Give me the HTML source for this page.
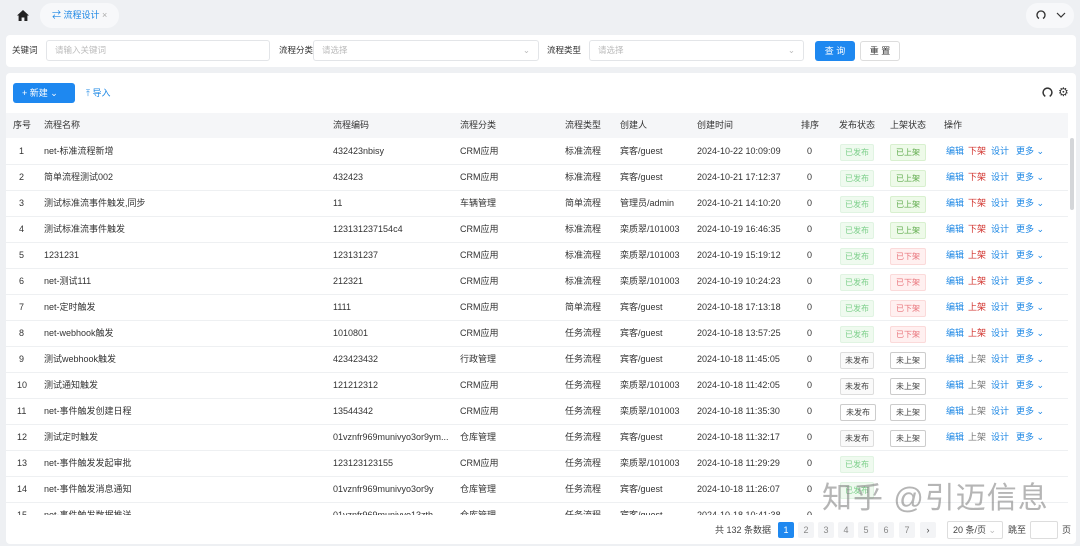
<!DOCTYPE html>
<html><head><meta charset="utf-8">
<style>
*{box-sizing:border-box;margin:0;padding:0}
body{width:1080px;height:546px;overflow:hidden;background:#eef0f3;font-family:"Liberation Sans","Noto Sans CJK SC",sans-serif;font-size:9px;line-height:11px;color:#333;position:relative}
.abs{position:absolute}
.card{position:absolute;background:#fff;border-radius:4px}
.inp{position:absolute;border:1px solid #e3e5e8;border-radius:3px;height:21px;color:#bbb;font-size:8.5px;line-height:11px;padding:4px 8px;background:#fff}
.lbl{position:absolute;font-size:8.5px;color:#333;line-height:11px}
.row{position:absolute;left:6px;width:1062px;height:26px;border-bottom:1px solid #eef0f2}
.row span{position:absolute;top:7px;white-space:nowrap;line-height:11px}
.tag{border-radius:2px;font-size:8px;padding:2px 4px;top:5px!important}
.g1{background:#effaef;color:#7ccf8a;border:1px solid #e0f4e2}
.g2{background:#eefae9;color:#5daa4a;border:1px solid #d8f0cf;padding:2px 5px!important}
.r2{background:#fff0f0;color:#e8737a;border:1px solid #fbdada;padding:2px 5px!important}
.n1{background:#fafafa;color:#444;border:1px solid #ddd}
.n2{background:#fff;color:#444;border:1px solid #ccc;padding:2px 5px!important}
.b{color:#1e88e5}.rd{color:#d2322d}.gy{color:#777}
.pg{position:absolute;top:522px;width:16px;height:16px;border-radius:2px;background:#f3f4f6;color:#888;font-size:9px;text-align:center;line-height:16px}
</style></head><body>
<svg class="abs" style="left:17px;top:10px" width="12" height="11" viewBox="0 0 12 11"><path d="M6 0L0 5.5h1.6V11h3V7.5h2.8V11h3V5.5H12z" fill="#222"/></svg>
<div class="abs" style="left:40px;top:3px;width:79px;height:25px;background:#f7f8fa;border-radius:12px"></div>
<div class="abs" style="left:52px;top:10px;font-size:9px;color:#1e88e5">⇄ 流程设计 <span style="color:#aaa">×</span></div>
<div class="abs" style="left:1026px;top:3px;width:48px;height:25px;background:#f7f8fa;border-radius:12px"></div>
<svg class="abs" style="left:1036px;top:10px" width="10" height="10" viewBox="0 0 10 10"><path d="M3 8.5A4 4 0 1 1 7 8.5" fill="none" stroke="#333" stroke-width="1.3"/></svg>
<svg class="abs" style="left:1056px;top:12px" width="10" height="6" viewBox="0 0 10 6"><path d="M1 1l4 4 4-4" fill="none" stroke="#333" stroke-width="1.2"/></svg>
<div class="card" style="left:6px;top:35px;width:1070px;height:32px"></div>
<div class="lbl" style="left:12px;top:45px">关键词</div>
<div class="inp" style="left:46px;top:40px;width:224px">请输入关键词</div>
<div class="lbl" style="left:279px;top:45px">流程分类</div>
<div class="inp" style="left:313px;top:40px;width:226px">请选择<span style="position:absolute;right:8px">⌄</span></div>
<div class="lbl" style="left:547px;top:45px">流程类型</div>
<div class="inp" style="left:589px;top:40px;width:215px">请选择<span style="position:absolute;right:8px">⌄</span></div>
<div class="abs" style="left:815px;top:41px;width:40px;height:20px;background:#1e88f0;border-radius:3px;color:#fff;font-size:9px;text-align:center;line-height:20px">查 询</div>
<div class="abs" style="left:860px;top:41px;width:40px;height:20px;background:#fff;border:1px solid #ddd;border-radius:3px;color:#333;font-size:9px;text-align:center;line-height:18px">重 置</div>
<div class="card" style="left:6px;top:73px;width:1070px;height:471px"></div>
<div class="abs" style="left:13px;top:83px;width:62px;height:20px;background:#1e88f0;border-radius:3px;color:#fff;font-size:9px;line-height:20px;padding-left:9px">+ 新建 ⌄</div>
<div class="abs" style="left:86px;top:88px;color:#1e88e5;font-size:9px">⤒ 导入</div>
<svg class="abs" style="left:1042px;top:87px" width="11" height="11" viewBox="0 0 10 10"><path d="M3 8.5A4 4 0 1 1 7 8.5" fill="none" stroke="#333" stroke-width="1.3"/></svg>
<div class="abs" style="left:1058px;top:85px;font-size:12px;line-height:14px;color:#333">⚙</div>
<div class="abs" style="left:6px;top:113px;width:1062px;height:25px;background:#f5f6f8"></div>
<div class="row" style="top:113px;border:none"><span style="left:7px">序号</span><span style="left:38px">流程名称</span><span style="left:327px">流程编码</span><span style="left:454px">流程分类</span><span style="left:559px">流程类型</span><span style="left:614px">创建人</span><span style="left:691px">创建时间</span><span style="left:795px">排序</span><span style="left:833px">发布状态</span><span style="left:884px">上架状态</span><span style="left:938px">操作</span></div>
<div class="abs" style="left:6px;top:138px;width:1062px;height:377px;overflow:hidden">
<div style="position:relative;left:-6px;top:-137px">
<div class="row" style="top:138px"><span style="left:13px">1</span><span style="left:38px">net-标准流程新增</span><span style="left:327px">432423nbisy</span><span style="left:454px">CRM应用</span><span style="left:559px">标准流程</span><span style="left:614px">宾客/guest</span><span style="left:691px">2024-10-22 10:09:09</span><span style="left:801px">0</span><span class="tag g1" style="left:834px">已发布</span><span class="tag g2" style="left:884px">已上架</span><span class="b" style="left:940px">编辑</span><span class="rd" style="left:962px">下架</span><span class="b" style="left:985px">设计</span><span class="b" style="left:1010px">更多 ⌄</span></div>
<div class="row" style="top:164px"><span style="left:13px">2</span><span style="left:38px">简单流程测试002</span><span style="left:327px">432423</span><span style="left:454px">CRM应用</span><span style="left:559px">标准流程</span><span style="left:614px">宾客/guest</span><span style="left:691px">2024-10-21 17:12:37</span><span style="left:801px">0</span><span class="tag g1" style="left:834px">已发布</span><span class="tag g2" style="left:884px">已上架</span><span class="b" style="left:940px">编辑</span><span class="rd" style="left:962px">下架</span><span class="b" style="left:985px">设计</span><span class="b" style="left:1010px">更多 ⌄</span></div>
<div class="row" style="top:190px"><span style="left:13px">3</span><span style="left:38px">测试标准流事件触发,同步</span><span style="left:327px">11</span><span style="left:454px">车辆管理</span><span style="left:559px">简单流程</span><span style="left:614px">管理员/admin</span><span style="left:691px">2024-10-21 14:10:20</span><span style="left:801px">0</span><span class="tag g1" style="left:834px">已发布</span><span class="tag g2" style="left:884px">已上架</span><span class="b" style="left:940px">编辑</span><span class="rd" style="left:962px">下架</span><span class="b" style="left:985px">设计</span><span class="b" style="left:1010px">更多 ⌄</span></div>
<div class="row" style="top:216px"><span style="left:13px">4</span><span style="left:38px">测试标准流事件触发</span><span style="left:327px">123131237154c4</span><span style="left:454px">CRM应用</span><span style="left:559px">标准流程</span><span style="left:614px">栾质翠/101003</span><span style="left:691px">2024-10-19 16:46:35</span><span style="left:801px">0</span><span class="tag g1" style="left:834px">已发布</span><span class="tag g2" style="left:884px">已上架</span><span class="b" style="left:940px">编辑</span><span class="rd" style="left:962px">下架</span><span class="b" style="left:985px">设计</span><span class="b" style="left:1010px">更多 ⌄</span></div>
<div class="row" style="top:242px"><span style="left:13px">5</span><span style="left:38px">1231231</span><span style="left:327px">123131237</span><span style="left:454px">CRM应用</span><span style="left:559px">标准流程</span><span style="left:614px">栾质翠/101003</span><span style="left:691px">2024-10-19 15:19:12</span><span style="left:801px">0</span><span class="tag g1" style="left:834px">已发布</span><span class="tag r2" style="left:884px">已下架</span><span class="b" style="left:940px">编辑</span><span class="rd" style="left:962px">上架</span><span class="b" style="left:985px">设计</span><span class="b" style="left:1010px">更多 ⌄</span></div>
<div class="row" style="top:268px"><span style="left:13px">6</span><span style="left:38px">net-测试111</span><span style="left:327px">212321</span><span style="left:454px">CRM应用</span><span style="left:559px">标准流程</span><span style="left:614px">栾质翠/101003</span><span style="left:691px">2024-10-19 10:24:23</span><span style="left:801px">0</span><span class="tag g1" style="left:834px">已发布</span><span class="tag r2" style="left:884px">已下架</span><span class="b" style="left:940px">编辑</span><span class="rd" style="left:962px">上架</span><span class="b" style="left:985px">设计</span><span class="b" style="left:1010px">更多 ⌄</span></div>
<div class="row" style="top:294px"><span style="left:13px">7</span><span style="left:38px">net-定时触发</span><span style="left:327px">1111</span><span style="left:454px">CRM应用</span><span style="left:559px">简单流程</span><span style="left:614px">宾客/guest</span><span style="left:691px">2024-10-18 17:13:18</span><span style="left:801px">0</span><span class="tag g1" style="left:834px">已发布</span><span class="tag r2" style="left:884px">已下架</span><span class="b" style="left:940px">编辑</span><span class="rd" style="left:962px">上架</span><span class="b" style="left:985px">设计</span><span class="b" style="left:1010px">更多 ⌄</span></div>
<div class="row" style="top:320px"><span style="left:13px">8</span><span style="left:38px">net-webhook触发</span><span style="left:327px">1010801</span><span style="left:454px">CRM应用</span><span style="left:559px">任务流程</span><span style="left:614px">宾客/guest</span><span style="left:691px">2024-10-18 13:57:25</span><span style="left:801px">0</span><span class="tag g1" style="left:834px">已发布</span><span class="tag r2" style="left:884px">已下架</span><span class="b" style="left:940px">编辑</span><span class="rd" style="left:962px">上架</span><span class="b" style="left:985px">设计</span><span class="b" style="left:1010px">更多 ⌄</span></div>
<div class="row" style="top:346px"><span style="left:13px">9</span><span style="left:38px">测试webhook触发</span><span style="left:327px">423423432</span><span style="left:454px">行政管理</span><span style="left:559px">任务流程</span><span style="left:614px">宾客/guest</span><span style="left:691px">2024-10-18 11:45:05</span><span style="left:801px">0</span><span class="tag n1" style="left:834px">未发布</span><span class="tag n2" style="left:884px">未上架</span><span class="b" style="left:940px">编辑</span><span class="gy" style="left:962px">上架</span><span class="b" style="left:985px">设计</span><span class="b" style="left:1010px">更多 ⌄</span></div>
<div class="row" style="top:372px"><span style="left:11px">10</span><span style="left:38px">测试通知触发</span><span style="left:327px">121212312</span><span style="left:454px">CRM应用</span><span style="left:559px">任务流程</span><span style="left:614px">栾质翠/101003</span><span style="left:691px">2024-10-18 11:42:05</span><span style="left:801px">0</span><span class="tag n1" style="left:834px">未发布</span><span class="tag n2" style="left:884px">未上架</span><span class="b" style="left:940px">编辑</span><span class="gy" style="left:962px">上架</span><span class="b" style="left:985px">设计</span><span class="b" style="left:1010px">更多 ⌄</span></div>
<div class="row" style="top:398px"><span style="left:11px">11</span><span style="left:38px">net-事件触发创建日程</span><span style="left:327px">13544342</span><span style="left:454px">CRM应用</span><span style="left:559px">任务流程</span><span style="left:614px">栾质翠/101003</span><span style="left:691px">2024-10-18 11:35:30</span><span style="left:801px">0</span><span class="tag n2" style="left:834px">未发布</span><span class="tag n2" style="left:884px">未上架</span><span class="b" style="left:940px">编辑</span><span class="gy" style="left:962px">上架</span><span class="b" style="left:985px">设计</span><span class="b" style="left:1010px">更多 ⌄</span></div>
<div class="row" style="top:424px"><span style="left:11px">12</span><span style="left:38px">测试定时触发</span><span style="left:327px">01vznfr969munivyo3or9ym...</span><span style="left:454px">仓库管理</span><span style="left:559px">任务流程</span><span style="left:614px">宾客/guest</span><span style="left:691px">2024-10-18 11:32:17</span><span style="left:801px">0</span><span class="tag n1" style="left:834px">未发布</span><span class="tag n2" style="left:884px">未上架</span><span class="b" style="left:940px">编辑</span><span class="gy" style="left:962px">上架</span><span class="b" style="left:985px">设计</span><span class="b" style="left:1010px">更多 ⌄</span></div>
<div class="row" style="top:450px"><span style="left:11px">13</span><span style="left:38px">net-事件触发发起审批</span><span style="left:327px">123123123155</span><span style="left:454px">CRM应用</span><span style="left:559px">任务流程</span><span style="left:614px">栾质翠/101003</span><span style="left:691px">2024-10-18 11:29:29</span><span style="left:801px">0</span><span class="tag g1" style="left:834px">已发布</span></div>
<div class="row" style="top:476px"><span style="left:11px">14</span><span style="left:38px">net-事件触发消息通知</span><span style="left:327px">01vznfr969munivyo3or9y</span><span style="left:454px">仓库管理</span><span style="left:559px">任务流程</span><span style="left:614px">宾客/guest</span><span style="left:691px">2024-10-18 11:26:07</span><span style="left:801px">0</span><span class="tag g1" style="left:834px">已发布</span></div>
<div class="row" style="top:502px"><span style="left:11px">15</span><span style="left:38px">net-事件触发数据推送</span><span style="left:327px">01vznfr969munivyo13zth</span><span style="left:454px">仓库管理</span><span style="left:559px">任务流程</span><span style="left:614px">宾客/guest</span><span style="left:691px">2024-10-18 10:41:38</span><span style="left:801px">0</span></div>
</div></div>
<div class="abs" style="left:1070px;top:138px;width:4px;height:72px;background:#d4d6d9;border-radius:2px"></div>
<div class="abs" style="left:715px;top:525px;font-size:9px;color:#444">共 132 条数据</div>
<div class="pg" style="left:778px;background:#1e88f0;color:#fff">1</div>
<div class="pg" style="left:798px">2</div>
<div class="pg" style="left:818px">3</div>
<div class="pg" style="left:838px">4</div>
<div class="pg" style="left:858px">5</div>
<div class="pg" style="left:878px">6</div>
<div class="pg" style="left:899px">7</div>
<div class="pg" style="left:920px;color:#444">›</div>
<div class="abs" style="left:947px;top:521px;width:56px;height:18px;border:1px solid #ddd;border-radius:2px;font-size:9px;color:#444;padding:3px 5px;white-space:nowrap;overflow:hidden">20 条/页 <span style="color:#bbb">⌄</span></div>
<div class="abs" style="left:1008px;top:525px;font-size:9px;color:#444">跳至</div>
<div class="abs" style="left:1030px;top:521px;width:28px;height:18px;border:1px solid #ddd;border-radius:2px;background:#fff"></div>
<div class="abs" style="left:1062px;top:525px;font-size:9px;color:#444">页</div>
<div class="abs" style="left:822px;top:481px;font-size:30px;line-height:36px;color:rgba(120,120,120,0.55);letter-spacing:1px;white-space:nowrap">知乎 @引迈信息</div>
</body></html>
